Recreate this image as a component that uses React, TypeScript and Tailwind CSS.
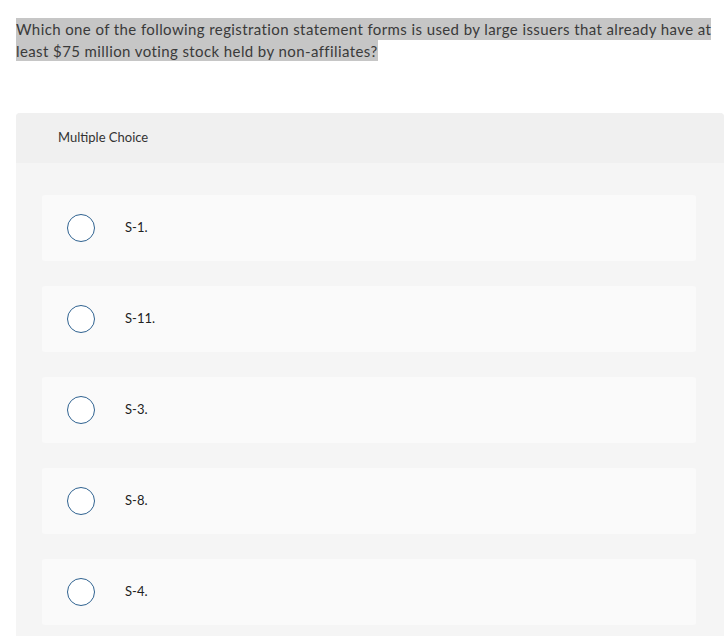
import React from "react";

const options = ["S-1.", "S-11.", "S-3.", "S-8.", "S-4."];

export default function App() {
  return (
    <div
      className="min-h-[636px] w-[728px] bg-white text-[#333]"
      style={{ fontFamily: "Lato, 'Open Sans', sans-serif" }}
    >
      <div className="px-4 pt-[19px] text-[15px] leading-[21.5px] tracking-[0.4px] text-[#3a3a3a]">
        <span className="bg-[#c6c6c6] py-[1.75px] [box-decoration-break:clone]">
          Which one of the following registration statement forms is used by large issuers that already have at
          <br />
          least $75 million voting stock held by non-affiliates?
        </span>
      </div>
      <div className="ml-4 mr-1 mt-[51px] rounded-t bg-[#f5f5f5]">
        <div className="flex h-[50px] items-center rounded-t bg-[#f0f0f0] pl-[42px] text-[13px] text-[#333]">
          Multiple Choice
        </div>
        <div className="flex flex-col gap-[25px] pb-[20px] pl-[26px] pr-[28px] pt-8">
          {options.map((o) => (
            <div
              key={o}
              className="flex h-[66px] items-center rounded-[3px] bg-[#fafafa]"
            >
              <div className="ml-[25px] h-[28px] w-[28px] rounded-full border-[1.5px] border-[#2f6290] bg-white" />
              <span className="ml-[30px] text-[13px] text-[#222]">{o}</span>
            </div>
          ))}
        </div>
      </div>
    </div>
  );
}
